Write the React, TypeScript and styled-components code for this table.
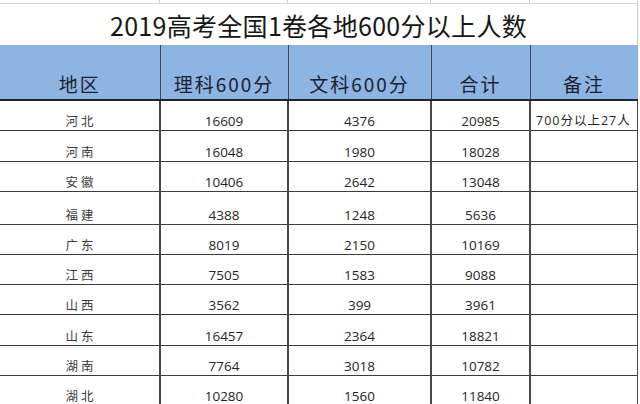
import React from 'react'
import styled, { createGlobalStyle } from 'styled-components'

const GlobalStyle = createGlobalStyle`
	html, body {
		margin: 0;
		padding: 0;
		background: #ffffff;
	}
	body {
		font-family: 'Noto Sans CJK SC', 'Liberation Sans', sans-serif;
		color: #1e1e1e;
	}
`

const columns = [160, 128, 143, 99, 108]

const headers = ['地区', '理科600分', '文科600分', '合计', '备注']

interface Row {
	region: string
	science: string
	arts: string
	total: string
	note?: string
	h: number
}

const rows: Row[] = [
	{ region: '河北', science: '16609', arts: '4376', total: '20985', note: '700分以上27人', h: 30 },
	{ region: '河南', science: '16048', arts: '1980', total: '18028', h: 31 },
	{ region: '安徽', science: '10406', arts: '2642', total: '13048', h: 30 },
	{ region: '福建', science: '4388', arts: '1248', total: '5636', h: 33 },
	{ region: '广东', science: '8019', arts: '2150', total: '10169', h: 30 },
	{ region: '江西', science: '7505', arts: '1583', total: '9088', h: 30 },
	{ region: '山西', science: '3562', arts: '399', total: '3961', h: 30 },
	{ region: '山东', science: '16457', arts: '2364', total: '18821', h: 31 },
	{ region: '湖南', science: '7764', arts: '3018', total: '10782', h: 30 },
	{ region: '湖北', science: '10280', arts: '1560', total: '11840', h: 30 },
]

const App: React.FC = () => {
	return (
		<>
			<GlobalStyle />
			<Sheet>
				<GridStrip>
					{columns.map((w, i) => (
						<StripCell key={i} $w={w} />
					))}
				</GridStrip>
				<Title>2019高考全国1卷各地600分以上人数</Title>
				<Table>
					<colgroup>
						{columns.map((w, i) => (
							<col key={i} style={{ width: w }} />
						))}
					</colgroup>
					<thead>
						<tr>
							{headers.map((h, i) => (
								<HeadCell key={h} $first={i === 0}>
									{h}
								</HeadCell>
							))}
						</tr>
					</thead>
					<tbody>
						{rows.map(r => (
							<BodyRow key={r.region} $h={r.h}>
								<RegionCell>{r.region}</RegionCell>
								<NumCell>{r.science}</NumCell>
								<NumCell>{r.arts}</NumCell>
								<NumCell>{r.total}</NumCell>
								<NoteCell>{r.note}</NoteCell>
							</BodyRow>
						))}
					</tbody>
				</Table>
			</Sheet>
		</>
	)
}

export default App

const Sheet = styled.div`
	width: 638px;
	overflow: hidden;
`

const GridStrip = styled.div`
	display: flex;
	height: 3px;
	border-bottom: 1px solid #d6d6d6;
`

const StripCell = styled.div<{ $w: number }>`
	flex: 0 0 ${({ $w }) => $w}px;
	box-sizing: border-box;
	border-right: 1px solid #cfcfcf;
`

const Title = styled.div`
	height: 41px;
	box-sizing: border-box;
	border-right: 1px solid #c8c8c8;
	font-family: 'Noto Sans CJK SC', sans-serif;
	font-size: 25px;
	line-height: 41px;
	padding-top: 1px;
	text-align: center;
	color: #161616;
	letter-spacing: 0.3px;
`

const Table = styled.table`
	border-collapse: collapse;
	table-layout: fixed;
	width: 638px;
`

const HeadCell = styled.th<{ $first?: boolean }>`
	height: 51px;
	padding: 0 0 3px;
	background: #8eb4e3;
	border-left: ${({ $first }) => ($first ? 'none' : '1px solid #3c4656')};
	border-right: 1px solid #3c4656;
	border-bottom: 2px solid #1f2530;
	vertical-align: bottom;
	font-family: 'Noto Sans CJK SC', sans-serif;
	font-weight: 400;
	font-size: 19px;
	line-height: 24px;
	letter-spacing: 2px;
	color: #1b2130;
	text-align: center;
`

const BodyRow = styled.tr<{ $h: number }>`
	height: ${({ $h }) => $h}px;

	td {
		border-bottom: 1px solid #3a3a3a;
		border-right: 2px solid #484848;
		vertical-align: bottom;
		padding: 0 0 1px;
		line-height: 16px;
	}

	td:first-child {
		border-left: none;
	}
`

const RegionCell = styled.td`
	text-align: center;
	font-family: 'Noto Sans CJK SC', sans-serif;
	font-size: 12.5px;
	letter-spacing: 3px;
	color: #3c3c3c;
	padding-left: 3px !important;
`

const NumCell = styled.td`
	text-align: center;
	font-family: 'Open Sans', 'Liberation Sans', sans-serif;
	font-size: 13.5px;
	color: #262626;
`

const NoteCell = styled.td`
	text-align: left;
	padding-left: 5px !important;
	font-family: 'Open Sans', 'Noto Sans CJK SC', sans-serif;
	font-size: 12.5px;
	letter-spacing: 1px;
	color: #262626;
	white-space: nowrap;
`
